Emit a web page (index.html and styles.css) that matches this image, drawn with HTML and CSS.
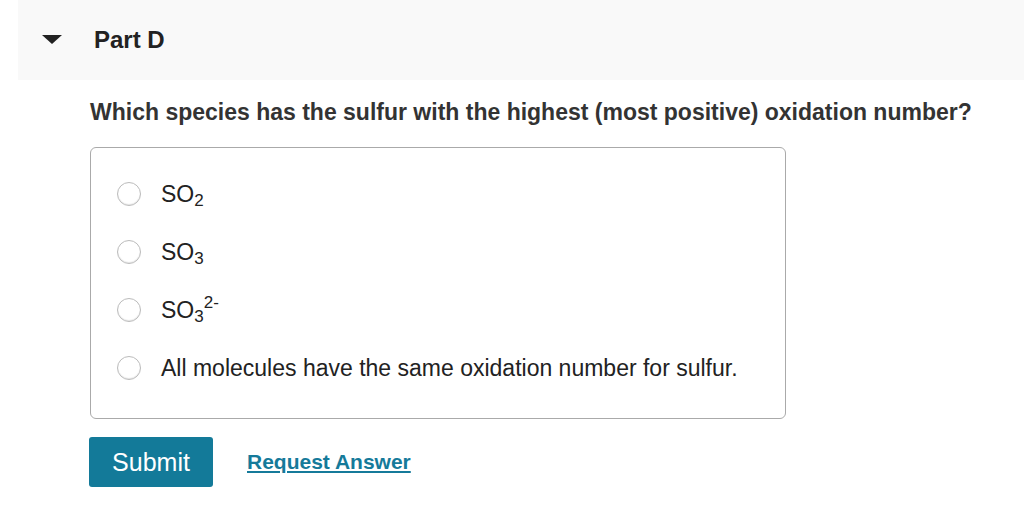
FILE: index.html
```html
<!DOCTYPE html>
<html lang="en">
<head>
    <meta charset="UTF-8">
    <meta name="viewport" content="width=device-width, initial-scale=1.0">
    <title>Part D</title>
    <link rel="stylesheet" href="styles.css">
</head>
<body>
    <div class="part">
        <div class="part-header">
            <span class="toggle"></span>
            <h2>Part D</h2>
        </div>
        <div class="part-body">
            <p class="question">Which species has the sulfur with the highest (most positive) oxidation number?</p>
            <div class="choices">
                <label class="choice"><input type="radio" name="answer"><span class="radio"></span><span>SO<sub>2</sub></span></label>
                <label class="choice"><input type="radio" name="answer"><span class="radio"></span><span>SO<sub>3</sub></span></label>
                <label class="choice"><input type="radio" name="answer"><span class="radio"></span><span>SO<sub>3</sub><sup>2-</sup></span></label>
                <label class="choice"><input type="radio" name="answer"><span class="radio"></span><span>All molecules have the same oxidation number for sulfur.</span></label>
            </div>
            <div class="actions">
                <button class="submit">Submit</button>
                <a href="#" class="request">Request Answer</a>
            </div>
        </div>
    </div>
</body>
</html>
```

FILE: styles.css
```css
body {
    margin: 0;
    font-family: "Liberation Sans", Arial, sans-serif;
    color: #333;
    background: #fff;
}
.part {
    margin-left: 18px;
}
.part-header {
    background: #f9f9f9;
    height: 80px;
    display: flex;
    align-items: center;
    padding-left: 24px;
}
.toggle {
    width: 0;
    height: 0;
    border-left: 10px solid transparent;
    border-right: 10px solid transparent;
    border-top: 9px solid #222;
    margin-top: -2px;
}
.part-header h2 {
    margin: 0 0 0 32px;
    font-size: 24px;
    color: #222;
}
.part-body {
    padding-left: 72px;
}
.question {
    margin: 18px 0 21px;
    font-size: 23px;
    font-weight: bold;
    line-height: 28px;
}
.choices {
    width: 696px;
    height: 272px;
    border: 1px solid #aaa;
    border-radius: 6px;
    box-sizing: border-box;
    padding: 17px 0 0 26px;
}
.choice {
    display: flex;
    align-items: center;
    height: 58px;
    font-size: 23px;
    color: #222;
}
.choice input {
    display: none;
}
.radio {
    width: 22px;
    height: 22px;
    border: 1px solid #bbb;
    border-radius: 50%;
    background: #fff;
    margin-right: 20px;
    box-shadow: inset 0 -1px 1px #e6e6e6;
}
.choice sub {
    font-size: 17px;
    vertical-align: -4px;
    line-height: 0;
}
.choice sup {
    font-size: 17px;
    vertical-align: 10px;
    line-height: 0;
}
.actions {
    display: flex;
    align-items: center;
    margin-top: 18px;
}
.submit {
    width: 124px;
    height: 50px;
    margin-left: -1px;
    border: none;
    border-radius: 3px;
    background: #137a99;
    color: #fff;
    font-family: inherit;
    font-size: 25px;
    cursor: pointer;
}
.request {
    margin-left: 34px;
    font-size: 21px;
    font-weight: bold;
    color: #157a9a;
}
```
